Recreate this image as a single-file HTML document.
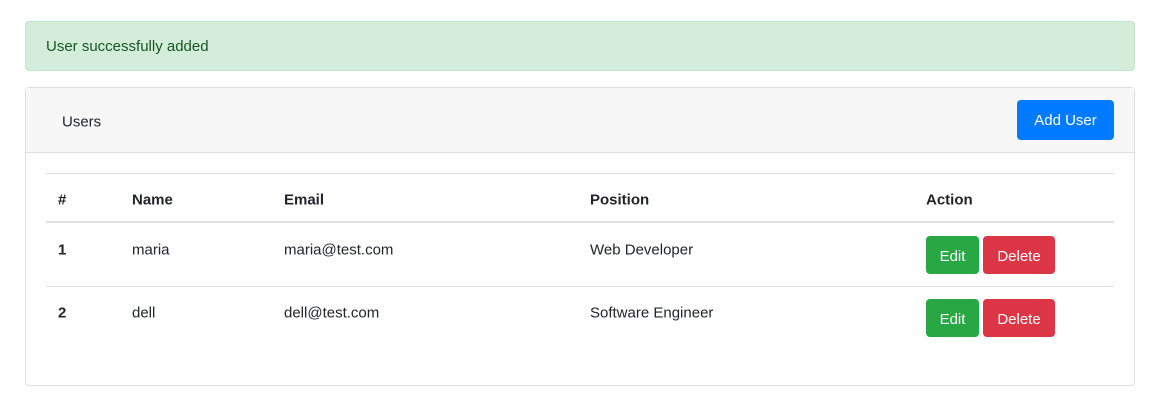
<!DOCTYPE html>
<html><head><style>
*{box-sizing:border-box;margin:0;padding:0}
body{width:1159px;height:412px;background:#fff;font-family:"Liberation Sans",sans-serif;font-size:15px;color:#212529;position:relative;overflow:hidden}
.a{position:absolute}
.alert{left:25px;top:21px;width:1110px;height:50px;background:#d4edda;border:1px solid #c3e6cb;border-radius:4px;color:#155724;padding:16px 20px;}
.card{left:25px;top:87px;width:1110px;height:299px;border:1px solid #dfdfdf;border-radius:4px}
.hdr{left:26px;top:88px;width:1108px;height:65px;background:#f7f7f7;border-bottom:1px solid #dfdfdf}
.btn{position:absolute;color:#fff;border-radius:4px;text-align:center;font-size:15px}
.line{position:absolute;left:46px;width:1068px;background:#dee2e6}
.t{position:absolute;transform:translateY(-50%)}
b{font-weight:bold}
</style></head><body>
<div class="a alert">User successfully added</div>
<div class="a card"></div>
<div class="a hdr"></div>
<div class="t" style="left:62px;top:122px">Users</div>
<div class="btn" style="left:1017px;top:100px;width:97px;height:40px;line-height:42px;background:#007bff">Add User</div>
<div class="line" style="top:173px;height:1px"></div>
<div class="line" style="top:221px;height:2px"></div>
<div class="line" style="top:286px;height:1px"></div>
<b class="t" style="left:58px;top:200px">#</b>
<b class="t" style="left:132px;top:200px">Name</b>
<b class="t" style="left:284px;top:200px">Email</b>
<b class="t" style="left:590px;top:200px">Position</b>
<b class="t" style="left:926px;top:200px">Action</b>
<b class="t" style="left:58px;top:250px">1</b>
<div class="t" style="left:132px;top:250px">maria</div>
<div class="t" style="left:284px;top:250px">maria@test.com</div>
<div class="t" style="left:590px;top:250px">Web Developer</div>
<b class="t" style="left:58px;top:313px">2</b>
<div class="t" style="left:132px;top:313px">dell</div>
<div class="t" style="left:284px;top:313px">dell@test.com</div>
<div class="t" style="left:590px;top:313px">Software Engineer</div>
<div class="btn" style="left:926px;top:236px;width:53px;height:38px;line-height:42px;background:#28a745">Edit</div>
<div class="btn" style="left:983px;top:236px;width:72px;height:38px;line-height:42px;background:#dc3545">Delete</div>
<div class="btn" style="left:926px;top:299px;width:53px;height:38px;line-height:42px;background:#28a745">Edit</div>
<div class="btn" style="left:983px;top:299px;width:72px;height:38px;line-height:42px;background:#dc3545">Delete</div>
</body></html>
